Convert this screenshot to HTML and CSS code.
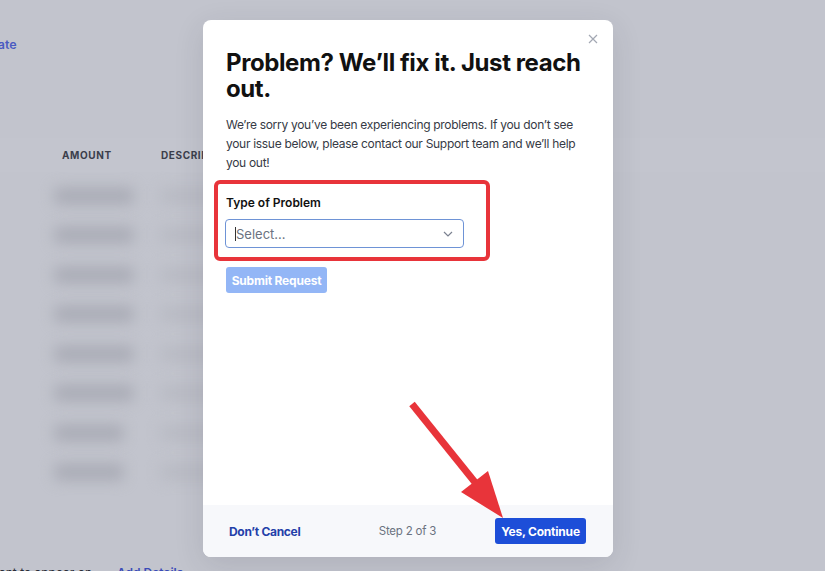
FILE: index.html
```html
<!DOCTYPE html>
<html lang="en">
<head>
    <meta charset="UTF-8">
    <meta name="viewport" content="width=device-width, initial-scale=1.0">
    <title>Report a problem</title>
    <link rel="stylesheet" href="styles.css">
</head>
<body>
    <div class="page">
        <a class="top-link" href="#">Update</a>

        <div class="table">
            <div class="thead">
                <span class="th">Amount</span>
                <span class="th">Description</span>
            </div>
            <div class="row"><span class="blur"></span><span class="blur light"></span></div>
            <div class="row"><span class="blur"></span><span class="blur light"></span></div>
            <div class="row"><span class="blur"></span><span class="blur light"></span></div>
            <div class="row"><span class="blur"></span><span class="blur light"></span></div>
            <div class="row"><span class="blur"></span><span class="blur light"></span></div>
            <div class="row"><span class="blur"></span><span class="blur light"></span></div>
            <div class="row"><span class="blur short"></span><span class="blur light"></span></div>
            <div class="row"><span class="blur short"></span><span class="blur light"></span></div>
        </div>

        <div class="footnote">
            <span>you want to appear on</span>
            <a href="#">Add Details</a>
        </div>
    </div>

    <div class="modal">
        <button class="close" aria-label="Close">
            <svg width="10" height="10" viewBox="0 0 10 10"><path d="M1 1L9 9M9 1L1 9" stroke="#a3a8b3" stroke-width="1.2" fill="none"/></svg>
        </button>
        <div class="modal-body">
            <h1>Problem? We’ll fix it. Just reach out.</h1>
            <p>We’re sorry you’ve been experiencing problems. If you don’t see your issue below, please contact our Support team and we’ll help you out!</p>

            <div class="field highlight">
                <label>Type of Problem</label>
                <div class="select">
                    <span class="caret"></span>
                    <span class="placeholder">Select...</span>
                    <svg class="chevron" width="10" height="6" viewBox="0 0 10 6"><path d="M1 1L5 5L9 1" stroke="#7b8190" stroke-width="1.2" fill="none"/></svg>
                </div>
            </div>

            <button class="submit" disabled>Submit Request</button>
        </div>
        <div class="modal-footer">
            <a class="back" href="#">Don’t Cancel</a>
            <span class="step">Step 2 of 3</span>
            <button class="continue">Yes, Continue</button>
        </div>
    </div>

    <!-- annotation arrow -->
    <svg class="arrow" width="825" height="571" viewBox="0 0 825 571">
        <line x1="412" y1="404" x2="482" y2="491" stroke="#e8343a" stroke-width="7"/>
        <polygon points="503,518 461,492 488,471" fill="#e8343a"/>
    </svg>
</body>
</html>
```

FILE: styles.css
```css
body {
    margin: 0;
    height: 571px;
    overflow: hidden;
    background: #c2c4cd;
    font-family: Inter, 'Noto Sans', sans-serif;
    color: #111827;
    position: relative;
}

a {
    text-decoration: none;
}

/* dimmed page behind the modal */
.page {
    padding-top: 38px;
}

.top-link {
    display: block;
    margin-left: -27px;
    font-size: 12.5px;
    line-height: 14px;
    font-weight: 600;
    color: #4a5bc2;
}

.table {
    margin-top: 86px;
}

.thead {
    height: 34px;
    margin-bottom: 4px;
    display: grid;
    grid-template-columns: 99px 200px;
    align-items: center;
    padding-left: 62px;
    background: rgba(255, 255, 255, 0.03);
}

.th {
    font-size: 10px;
    font-weight: 700;
    letter-spacing: 0.06em;
    text-transform: uppercase;
    color: #3b3e4b;
}

.row {
    height: 39.5px;
    display: grid;
    grid-template-columns: 106px 200px;
    align-items: center;
    padding-left: 54px;
}

.blur {
    display: block;
    width: 80px;
    height: 18px;
    background: #abadb7;
    border-radius: 5px;
    filter: blur(7px);
}

.blur.short {
    width: 70px;
}

.blur.light {
    width: 70px;
    background: #b9bbc4;
}

.footnote {
    margin-top: 73px;
    margin-left: -35px;
    display: flex;
    gap: 25px;
    font-size: 12px;
    color: #2a2d38;
}

.footnote a {
    color: #3a4bb8;
    font-weight: 600;
}

/* modal */
.modal {
    position: absolute;
    left: 203px;
    top: 20px;
    width: 410px;
    height: 537px;
    background: #fff;
    border-radius: 8px;
    box-shadow: 0 8px 30px rgba(40, 44, 60, 0.12);
    display: flex;
    flex-direction: column;
    overflow: hidden;
}

.close {
    position: absolute;
    top: 14px;
    right: 15px;
    border: none;
    background: none;
    padding: 0;
    width: 10px;
    height: 10px;
    line-height: 0;
}

.modal-body {
    flex: 1;
    padding: 30px 23px 0 23px;
}

h1 {
    margin: 0;
    font-size: 24px;
    line-height: 26px;
    font-weight: 700;
    letter-spacing: -0.4px;
    color: #111;
}

p {
    margin: 13px 0 0;
    font-size: 12px;
    line-height: 19px;
    letter-spacing: -0.3px;
    color: #363a45;
}

.field.highlight {
    margin: 8px 0 0 -12px;
    width: 239px;
    padding: 11px 22px 9px 7px;
    border: 4px solid #e8343a;
    border-radius: 6px;
}

label {
    display: block;
    margin-left: 1px;
    margin-bottom: 8px;
    font-size: 12px;
    line-height: 16px;
    font-weight: 600;
    color: #111;
}

.select {
    height: 27px;
    border: 1.5px solid #6e93d6;
    border-radius: 4px;
    display: flex;
    align-items: center;
    padding: 0 10px 0 9px;
}

.caret {
    width: 1px;
    height: 14px;
    background: #333;
}

.placeholder {
    flex: 1;
    font-size: 13px;
    color: #6b7280;
}

.submit {
    margin-top: 6px;
    width: 101px;
    height: 26px;
    border: none;
    border-radius: 3px;
    background: #93b6f6;
    color: #fff;
    font-family: inherit;
    font-size: 12px;
    font-weight: 700;
    letter-spacing: -0.2px;
    padding: 0;
}

.modal-footer {
    height: 52px;
    background: #f7f8fb;
    display: grid;
    grid-template-columns: 1fr auto 1fr;
    align-items: center;
    padding: 0 27px 0 26px;
}

.back {
    font-size: 12px;
    font-weight: 700;
    letter-spacing: -0.3px;
    color: #2340a9;
}

.step {
    font-size: 11.5px;
    letter-spacing: -0.2px;
    color: #6b7280;
}

.continue {
    justify-self: end;
    width: 91px;
    height: 26px;
    border: none;
    border-radius: 3px;
    background: #1d4ed8;
    color: #fff;
    font-family: inherit;
    font-size: 12px;
    font-weight: 700;
    letter-spacing: -0.2px;
    padding: 0;
}

.arrow {
    position: absolute;
    left: 0;
    top: 0;
    pointer-events: none;
}
```
